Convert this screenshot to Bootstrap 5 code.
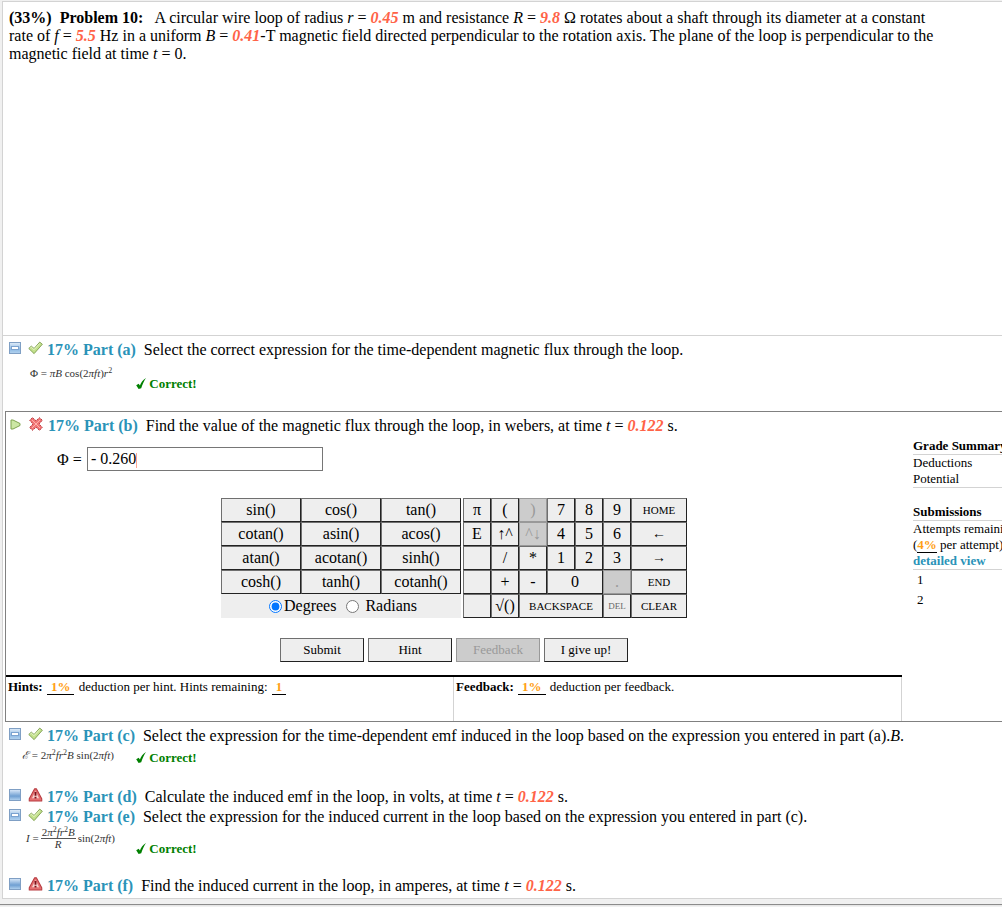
<!DOCTYPE html>
<html lang="en">
<head>
<meta charset="utf-8">
<meta name="viewport" content="width=device-width, initial-scale=1">
<title>Problem 10</title>
<link href="https://cdn.jsdelivr.net/npm/bootstrap@5.3.0/dist/css/bootstrap.min.css" rel="stylesheet">
<style>
body{font-family:"Liberation Serif","Times New Roman",serif;font-size:16px;line-height:18px;color:#000;background:#f0f0f0;overflow-x:hidden}
.sheet{margin:1px 0 0 2px;border:1px solid #d3d3d3;border-right:0;background:#fff;padding-bottom:2px}
.prompt{min-height:334px;padding:7px 60px 0 6px;border-bottom:1px solid #d3d3d3}
.val{color:#ff6347;font-weight:bold;font-style:italic}
.part-row{height:20px;padding-left:6px;white-space:nowrap}
.part-row p{margin:0 0 0 4px;line-height:20px}
.part-row svg{flex:none;margin-bottom:4px}
.state{margin-left:7px}
.part-name,.detail-link{color:#2a93b8;font-weight:bold;margin-right:4px;text-decoration:none}
.answer{padding-left:19px}
.answer.tall{height:51px}
.answer.short{height:41px}
.answer.frac-row{height:49px}
.formula{width:114px;font-size:11px;line-height:11px;color:#333;white-space:nowrap}
.formula sup{font-size:8px;line-height:1}
.quot{text-align:center;margin:0 2px}
.quot span{display:block;padding:0 1px}
.quot span:first-child{border-bottom:1px solid #555}
.ok{color:#008000;font-size:13px;font-weight:bold;line-height:16px}
.ok svg{vertical-align:-1px}
.frac-row .ok{padding-top:14px}
.active-part{margin-left:2px;border:1px solid #808080;border-right:0}
.active-part .part-row{padding-left:4px}
.active-part .part-row p{margin-left:5px}
.work{min-width:0}
.reply{padding:11px 0 0 51px;height:62px}
.reply label{width:30px}
.field{position:relative;width:236px;height:24px}
.field input{width:100%;height:24px;border:1px solid #767676;padding:0 3px;font:inherit;color:#000;outline:0;border-radius:0}
.caret{position:absolute;left:49px;top:6px;width:1px;height:15px;background:#ffa590}
.keys{display:grid;grid-auto-rows:24px}
.fn-keys{grid-template-columns:repeat(3,80px)}
.num-keys{grid-template-columns:repeat(6,28px) 56px;margin-left:2px}
.key{border:1px solid;border-color:#6f6f6f #222 #222 #6f6f6f;border-radius:0;background:#eee;color:#000;padding:0;font-size:16px;line-height:20px;white-space:nowrap}
.key:disabled{background:#ccc;color:#999;border-color:#999}
.key.word{font-size:11px}
.key.arrow{font-size:14px}
.key.tiny{font-size:9px;color:#666}
.angle{grid-column:1/-1;background:#eee;line-height:22px;padding-left:4px}
.angle input{width:13px;height:13px;margin:0 2px 0 0}
.angle label+input{margin:0 6px 0 10px}
.wide{grid-column:span 2}
.wider{grid-column:span 3}
.act{width:84px;height:24px;font-size:13px}
.actions{padding-top:20px;height:57px}
.notes{border-top:2px solid #000;font-size:13px;line-height:16px;height:46px}
.notes>div{width:50%;border-right:1px solid #d3d3d3;padding:2px 2px 0}
.cost{color:#ffa014;font-weight:bold;border-bottom:1px solid #000;padding:0 4px;margin:0 1px}
.summary{width:100px;padding:26px 0 0 11px;font-size:13px;line-height:16px;white-space:nowrap;overflow:hidden}
.summary>div{border-bottom:1px solid #d3d3d3}
.summary .cost{padding:0;margin:0}
.summary li{line-height:20px}
.pane-edge{border-top:1px solid #8b8b8b;height:2px;background:#e6e6e6;margin-top:5px}
</style>
</head>
<body>
<svg class="position-absolute" width="0" height="0">
<defs>
<linearGradient id="blue" x1="0" y1="0" x2="0" y2="1"><stop stop-color="#e2eefa"/><stop offset=".6" stop-color="#8db9e3"/><stop offset="1" stop-color="#b5d4f0"/></linearGradient>
<linearGradient id="blueDeep" x1="0" y1="0" x2="0" y2="1"><stop stop-color="#dceafa"/><stop offset=".6" stop-color="#6f9fd2"/><stop offset="1" stop-color="#b5d4f0"/></linearGradient>
</defs>
<symbol id="minus" viewBox="0 0 12 12"><rect x=".5" y=".5" width="11" height="11" fill="url(#blue)" stroke="#7f9fc4"/><rect x="2.5" y="4.5" width="7" height="3" fill="#fff" stroke="#7ba3d0"/></symbol>
<symbol id="closed" viewBox="0 0 12 12"><rect x=".5" y=".5" width="11" height="11" fill="url(#blueDeep)" stroke="#7f9fc4"/></symbol>
<symbol id="tick" viewBox="0 0 16 14"><path d="M.8 7.500 3.500 5l3 2.500L12.500.7 15.300 3 6.500 13z" fill="#c3e18c" stroke="#82a056" stroke-linejoin="round"/><path d="m2.500 7 1-.8 3 2.600 6-6.600" fill="none" stroke="#e8f6c8"/></symbol>
<symbol id="cross" viewBox="0 0 14 14"><path d="M3.500.7 7 3.800 10.500.7l2.800 2.500L10 7l3.300 3.500-2.800 2.800L7 10.200l-3.500 3.100-2.800-2.800L4 7 .7 3.200z" fill="#f07575" stroke="#bc3e44" stroke-dasharray="2 .7"/><path d="m3 3 8 8m0-8-8 8" stroke="#ffb0aa"/></symbol>
<symbol id="warn" viewBox="0 0 13 13"><path d="M5.700.8h1.600l5 9.200v2H.7v-2z" fill="#e56f70" stroke="#b73b40" stroke-linejoin="round"/><path d="M6.500 2.800 9.800 9.500H3.200z" fill="#f8d4d0"/><path d="M6.500 3.800v3.400M6.500 8.200v1.500" stroke="#7d1018" stroke-width="1.800"/></symbol>
<symbol id="play" viewBox="0 0 11 11"><path d="M1 1h2l7 3.500v2L3 10H1z" fill="#cce7a4" stroke="#7fa34f" stroke-linejoin="round"/></symbol>
<symbol id="check" viewBox="0 0 10 11"><path d="M.2 7.200 2.700 5.800 3.900 7.600C5 5 6.500 2 9.900 0 7.800 3.500 6.500 6.500 5.200 10.300L2.600 10.900z" fill="#008000"/></symbol>
</svg>

<main class="sheet">
  <section class="prompt"><b>(33%)&nbsp; Problem 10:</b>&nbsp;&nbsp; A circular wire loop of radius <i>r</i> = <span class="val">0.45</span> m and resistance <i>R</i> = <span class="val">9.8</span> Ω rotates about a shaft through its diameter at a constant rate of <i>f</i> = <span class="val">5.5</span> Hz in a uniform <i>B</i> = <span class="val">0.41</span>-T magnetic field directed perpendicular to the rotation axis. The plane of the loop is perpendicular to the magnetic field at time <i>t</i> = 0.</section>

  <section>
    <div class="part-row d-flex align-items-center mt-1"><svg width="12" height="12"><use href="#minus"/></svg><svg class="state" width="15" height="14"><use href="#tick"/></svg><p><a href="#" class="part-name">17% Part (a)</a> Select the correct expression for the time-dependent magnetic flux through the loop.</p></div>
    <div class="answer tall d-flex"><div class="formula ps-2 pt-2">Φ = <i>πB</i> cos(2<i>πft</i>)<i>r</i><sup>2</sup></div><div class="ok pt-3"><svg width="10" height="11"><use href="#check"/></svg> Correct!</div></div>
  </section>

  <section class="active-part">
    <div class="d-flex">
      <div class="work flex-grow-1">
        <div class="part-row d-flex align-items-center mt-1"><svg width="11" height="11"><use href="#play"/></svg><svg class="ms-2" width="14" height="14"><use href="#cross"/></svg><p><a href="#" class="part-name">17% Part (b)</a> Find the value of the magnetic flux through the loop, in webers, at time <i>t</i> = <span class="val">0.122</span> s.</p></div>
        <form>
          <div class="reply d-flex"><label for="flux" class="pt-1">Φ =</label><div class="field"><input id="flux" type="text" value="- 0.260"><span class="caret"></span></div></div>
          <div class="d-flex justify-content-center">
            <div class="keys fn-keys">
              <button type="button" class="key">sin()</button><button type="button" class="key">cos()</button><button type="button" class="key">tan()</button>
              <button type="button" class="key">cotan()</button><button type="button" class="key">asin()</button><button type="button" class="key">acos()</button>
              <button type="button" class="key">atan()</button><button type="button" class="key">acotan()</button><button type="button" class="key">sinh()</button>
              <button type="button" class="key">cosh()</button><button type="button" class="key">tanh()</button><button type="button" class="key">cotanh()</button>
              <div class="angle d-flex justify-content-center align-items-center"><input type="radio" name="angle" id="deg" checked><label for="deg">Degrees</label><input type="radio" name="angle" id="rad"><label for="rad">Radians</label></div>
            </div>
            <div class="keys num-keys">
              <button type="button" class="key">π</button><button type="button" class="key">(</button><button type="button" class="key" disabled>)</button><button type="button" class="key">7</button><button type="button" class="key">8</button><button type="button" class="key">9</button><button type="button" class="key word">HOME</button>
              <button type="button" class="key">E</button><button type="button" class="key">↑^</button><button type="button" class="key" disabled>^↓</button><button type="button" class="key">4</button><button type="button" class="key">5</button><button type="button" class="key">6</button><button type="button" class="key arrow">←</button>
              <button type="button" class="key" aria-label="blank"></button><button type="button" class="key">/</button><button type="button" class="key">*</button><button type="button" class="key">1</button><button type="button" class="key">2</button><button type="button" class="key">3</button><button type="button" class="key arrow">→</button>
              <button type="button" class="key" aria-label="blank"></button><button type="button" class="key">+</button><button type="button" class="key">-</button><button type="button" class="key wide">0</button><button type="button" class="key" disabled>.</button><button type="button" class="key word">END</button>
              <button type="button" class="key" aria-label="blank"></button><button type="button" class="key">√()</button><button type="button" class="key word wider">BACKSPACE</button><button type="button" class="key tiny">DEL</button><button type="button" class="key word">CLEAR</button>
            </div>
          </div>
          <div class="actions d-flex justify-content-center gap-1"><button type="button" class="key act">Submit</button><button type="button" class="key act">Hint</button><button type="button" class="key act" disabled>Feedback</button><button type="button" class="key act">I give up!</button></div>
        </form>
        <div class="notes d-flex"><div><b>Hints:</b> <span class="cost">1%</span> deduction per hint. Hints remaining: <span class="cost">1</span></div><div><b>Feedback:</b> <span class="cost">1%</span> deduction per feedback.</div></div>
      </div>
      <aside class="summary flex-shrink-0">
        <div><b>Grade Summary</b></div>
        <div>Deductions<br>Potential</div>
        <div class="mt-3"><b>Submissions</b></div>
        <div>Attempts remaining:<br>(<span class="cost">4%</span> per attempt)<br><a href="#" class="detail-link">detailed view</a></div>
        <ol class="list-unstyled ps-1 m-0"><li>1</li><li>2</li></ol>
      </aside>
    </div>
  </section>

  <section>
    <div class="part-row d-flex align-items-center mt-1"><svg width="12" height="12"><use href="#minus"/></svg><svg class="state" width="15" height="14"><use href="#tick"/></svg><p><a href="#" class="part-name">17% Part (c)</a> Select the expression for the time-dependent emf induced in the loop based on the expression you entered in part (a).<i>B</i>.</p></div>
    <div class="answer short d-flex"><div class="formula pt-1"><i>ℰ</i> = 2<i>π</i><sup>2</sup><i>fr</i><sup>2</sup><i>B</i> sin(2<i>πft</i>)</div><div class="ok pt-1"><svg width="10" height="11"><use href="#check"/></svg> Correct!</div></div>
  </section>
  <section>
    <div class="part-row d-flex align-items-center"><svg width="12" height="12"><use href="#closed"/></svg><svg class="state" width="15" height="14"><use href="#warn"/></svg><p><a href="#" class="part-name">17% Part (d)</a> Calculate the induced emf in the loop, in volts, at time <i>t</i> = <span class="val">0.122</span> s.</p></div>
  </section>
  <section>
    <div class="part-row d-flex align-items-center"><svg width="12" height="12"><use href="#minus"/></svg><svg class="state" width="15" height="14"><use href="#tick"/></svg><p><a href="#" class="part-name">17% Part (e)</a> Select the expression for the induced current in the loop based on the expression you entered in part (c).</p></div>
    <div class="answer frac-row d-flex align-items-start"><div class="formula d-flex align-items-center ps-1"><i>I</i>&nbsp;= <span class="quot"><span>2<i>π</i><sup>2</sup><i>fr</i><sup>2</sup><i>B</i></span><span><i>R</i></span></span> sin(2<i>πft</i>)</div><div class="ok"><svg width="10" height="11"><use href="#check"/></svg> Correct!</div></div>
  </section>
  <section>
    <div class="part-row d-flex align-items-center"><svg width="12" height="12"><use href="#closed"/></svg><svg class="state" width="15" height="14"><use href="#warn"/></svg><p><a href="#" class="part-name">17% Part (f)</a> Find the induced current in the loop, in amperes, at time <i>t</i> = <span class="val">0.122</span> s.</p></div>
  </section>
</main>
<div class="pane-edge"></div>
</body>
</html>
